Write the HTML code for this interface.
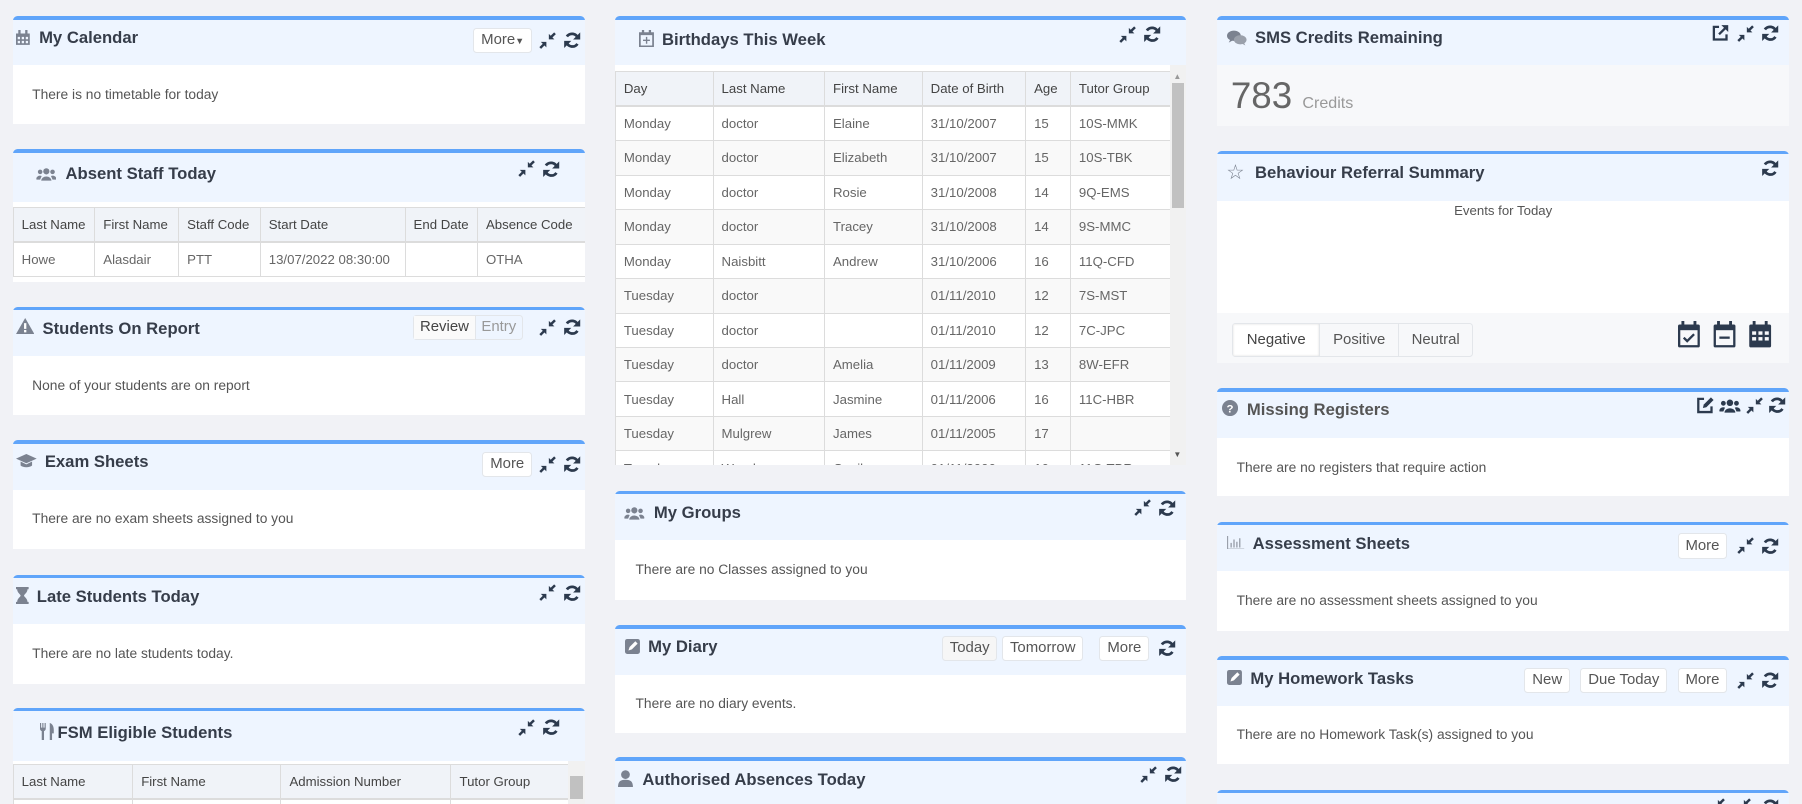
<!DOCTYPE html>
<html><head><meta charset="utf-8">
<style>
*{box-sizing:border-box;margin:0;padding:0}
html,body{width:1802px;height:804px;overflow:hidden;background:#f1f2f6}
#w{position:relative;width:1568px;height:700px;zoom:1.14923;font-family:"Liberation Sans",sans-serif;overflow:hidden}
.p{position:absolute;border-radius:4px 4px 0 0;overflow:hidden;background:#fff}
.p .bar{position:absolute;left:0;right:0;top:0;height:3px;background:#60a5fa}
.p .hd{position:absolute;left:0;right:0;top:3px;background:#eef5ff}
.p .tt{position:absolute;font-size:14.5px;font-weight:bold;color:#363d4a;white-space:nowrap}
.p .ti{position:absolute;color:#7b8290}
.p .bd{position:absolute;left:0;right:0;font-size:12px;color:#555;padding-left:17px}
.act{position:absolute;display:flex;align-items:center;gap:6px}
.ic{width:15px;height:15px;fill:#2c3a4e;stroke:#2c3a4e}
.rf{width:16px;height:16px;fill:#2c3a4e;stroke:#2c3a4e}
.btn{background:#fff;border:1px solid #e3e6ea;border-radius:3px;font-size:13px;color:#555;padding:2px 6px;height:22px;line-height:16px}
table{border-collapse:collapse;table-layout:fixed;font-size:11.5px;color:#666}
td,th{border:1px solid #dcdcdc;height:30px;padding:0 7px;text-align:left;font-weight:normal;white-space:nowrap;overflow:hidden}
th{background:#f0f3f8;color:#444;border-bottom:2px solid #dcdcdc}
tr.g td{background:#f9f9f9}
</style></head><body>
<svg width="0" height="0" style="position:absolute">
<defs>
<symbol id="cmp" viewBox="0 0 14 14"><path d="M1 13L4 10M13 1L10 4" stroke-width="2" fill="none"/><polygon points="6,8 6,12.5 1.5,8" stroke="none"/><polygon points="8,6 8,1.5 12.5,6" stroke="none"/></symbol>
<symbol id="ref" viewBox="0 0 16 16"><path d="M13 6.3A5.4 5.4 0 0 0 3.4 4.8M3 9.7A5.4 5.4 0 0 0 12.6 11.2" stroke-width="2.4" fill="none"/><polygon points="15,1.2 15,7.4 8.8,7.4" stroke="none"/><polygon points="1,14.8 1,8.6 7.2,8.6" stroke="none"/></symbol>
<symbol id="ext" viewBox="0 0 16 16"><path d="M7 2.5H2.5V13.5H13.5V9" stroke-width="2" fill="none"/><path d="M7 9L14 2" stroke-width="2" fill="none"/><polygon points="9,1 15,1 15,7" stroke="none"/></symbol>
<symbol id="grp" viewBox="0 0 20 14"><circle cx="10" cy="4" r="3"/><circle cx="4" cy="4.5" r="2.2"/><circle cx="16" cy="4.5" r="2.2"/><path d="M5 13a5 4 0 0 1 10 0z"/><path d="M0.5 12a3.5 3 0 0 1 5 -3.5L4 12z"/><path d="M19.5 12a3.5 3 0 0 0 -5 -3.5L16 12z"/></symbol>
</defs></svg>
<div id="w">

<div class="p" style="left:11px;top:14px;width:498px;height:94px">
 <div class="bar"></div><div class="hd" style="height:40px"></div>
 <svg class="ti" style="left:3px;top:12px" width="12" height="13" viewBox="0 0 12 13"><path fill="#7b8290" d="M0 3h12v10H0zM2 0h2v3H2zM8 0h2v3H8z"/><path fill="#eef5ff" d="M1.5 6h2v2h-2zM5 6h2v2H5zM8.5 6h2v2h-2zM1.5 9.5h2v2h-2zM5 9.5h2v2H5zM8.5 9.5h2v2h-2z"/></svg>
 <div class="tt" style="left:23px;top:10px">My Calendar</div>
 <div class="act" style="right:3px;top:10px"><div class="btn">More<span style="font-size:8px">▼</span></div><svg class="ic"><use href="#cmp"/></svg><svg class="rf"><use href="#ref"/></svg></div>
 <div class="bd" style="top:62px">There is no timetable for today</div>
</div>

<div class="p" style="left:11px;top:130px;width:498px;height:115px">
 <div class="bar"></div><div class="hd" style="height:43px"></div>
 <svg style="left:20px;top:15px;position:absolute" width="18" height="13"><use href="#grp" fill="#7b8290"/></svg>
 <div class="tt" style="left:46px;top:13px">Absent Staff Today</div>
 <div class="act" style="right:21px;top:9px"><svg class="ic"><use href="#cmp"/></svg><svg class="rf"><use href="#ref"/></svg></div>
 <table style="position:absolute;left:0;top:50px;width:498px">
  <colgroup><col style="width:71px"><col style="width:73px"><col style="width:71px"><col style="width:126px"><col style="width:63px"><col style="width:94px"></colgroup>
  <tr><th>Last Name</th><th>First Name</th><th>Staff Code</th><th>Start Date</th><th>End Date</th><th>Absence Code</th></tr>
  <tr><td>Howe</td><td>Alasdair</td><td>PTT</td><td>13/07/2022 08:30:00</td><td></td><td>OTHA</td></tr>
 </table>
</div>

<div class="p" style="left:11px;top:267px;width:498px;height:94px">
 <div class="bar"></div><div class="hd" style="height:40px"></div>
 <svg style="position:absolute;left:3px;top:10px" width="16" height="14" viewBox="0 0 16 14"><path fill="#7b8290" d="M8 0L16 14H0z"/><path fill="#fff" d="M7 4.5h2v5H7zM7 10.5h2v2H7z"/></svg>
 <div class="tt" style="left:26px;top:11px">Students On Report</div>
 <div class="act" style="right:3px;top:7px"><div style="display:flex;border:1px solid #e3e6ea;border-radius:3px;font-size:13px;height:22px;line-height:20px"><span style="background:#fafafa;padding:0 5px;color:#444;border-right:1px solid #e3e6ea">Review</span><span style="padding:0 5px;color:#999">Entry</span></div><svg class="ic" style="margin-left:8px"><use href="#cmp"/></svg><svg class="rf"><use href="#ref"/></svg></div>
 <div class="bd" style="top:62px">None of your students are on report</div>
</div>

<div class="p" style="left:11px;top:383px;width:498px;height:95px">
 <div class="bar"></div><div class="hd" style="height:40px"></div>
 <svg style="position:absolute;left:3px;top:12px" width="18" height="12" viewBox="0 0 18 12"><path fill="#7b8290" d="M9 0L18 4 9 8 0 4zM4 6.5v3.5c2 2 8 2 10 0V6.5L9 9z"/></svg>
 <div class="tt" style="left:28px;top:10px">Exam Sheets</div>
 <div class="act" style="right:3px;top:10px"><div class="btn">More</div><svg class="ic"><use href="#cmp"/></svg><svg class="rf"><use href="#ref"/></svg></div>
 <div class="bd" style="top:62px">There are no exam sheets assigned to you</div>
</div>

<div class="p" style="left:11px;top:500px;width:498px;height:95px">
 <div class="bar"></div><div class="hd" style="height:40px"></div>
 <svg style="position:absolute;left:3px;top:11px" width="11" height="15" viewBox="0 0 11 15"><path fill="#7b8290" d="M0 0h11v2H10C10 5 7 6.5 7 7.5S10 10 10 13h1v2H0v-2h1C1 10 4 8.5 4 7.5S1 5 1 2H0z"/></svg>
 <div class="tt" style="left:21px;top:11px">Late Students Today</div>
 <div class="act" style="right:3px;top:8px"><svg class="ic"><use href="#cmp"/></svg><svg class="rf"><use href="#ref"/></svg></div>
 <div class="bd" style="top:62px">There are no late students today.</div>
</div>

<div class="p" style="left:11px;top:616px;width:498px;height:90px">
 <div class="bar"></div><div class="hd" style="height:43px"></div>
 <svg style="position:absolute;left:24px;top:13px" width="12" height="15" viewBox="0 0 12 15"><path fill="#7b8290" d="M0 0h1v4h1V0h1v4h1V0h1v5c0 1-1 2-1.5 2V15h-2V7C1 7 0 6 0 5zM8 0c2 0 4 2 4 6v3h-1.5V15h-2V0z"/></svg>
 <div class="tt" style="left:39px;top:13px">FSM Eligible Students</div>
 <div class="act" style="right:21px;top:9px"><svg class="ic"><use href="#cmp"/></svg><svg class="rf"><use href="#ref"/></svg></div>
 <table style="position:absolute;left:0;top:49px;width:483px">
  <colgroup><col style="width:104px"><col style="width:129px"><col style="width:148px"><col style="width:102px"></colgroup>
  <tr><th>Last Name</th><th>First Name</th><th>Admission Number</th><th>Tutor Group</th></tr>
  <tr><td></td><td></td><td></td><td></td></tr>
 </table>
 <div style="position:absolute;left:483px;top:46px;width:15px;height:60px;background:#f1f1f1"></div>
 <div style="position:absolute;left:485px;top:59px;width:11px;height:20px;background:#c1c1c1"></div>
</div>

<div class="p" style="left:535px;top:14px;width:497px;height:391px">
 <div class="bar"></div><div class="hd" style="height:40px"></div>
 <svg style="position:absolute;left:21px;top:12px" width="13" height="15" viewBox="0 0 13 15"><path fill="#7b8290" d="M0 2h13v13H0zM2.5 0h2v3h-2zM8.5 0h2v3h-2z"/><path fill="#eef5ff" d="M1.5 4.5h10v9h-10z"/><path fill="#7b8290" d="M6 6h1.2v6H6zM3.5 8.4h6v1.2h-6z"/></svg>
 <div class="tt" style="left:41px;top:12px">Birthdays This Week</div>
 <div class="act" style="right:21px;top:8px"><svg class="ic"><use href="#cmp"/></svg><svg class="rf"><use href="#ref"/></svg></div>
 <div style="position:absolute;left:0;top:48px;width:483px;height:343px;overflow:hidden">
 <table style="width:483px">
  <colgroup><col style="width:85px"><col style="width:97px"><col style="width:85px"><col style="width:90px"><col style="width:39px"><col style="width:87px"></colgroup>
  <tr><th>Day</th><th>Last Name</th><th>First Name</th><th>Date of Birth</th><th>Age</th><th>Tutor Group</th></tr>
  <tr><td>Monday</td><td>doctor</td><td>Elaine</td><td>31/10/2007</td><td>15</td><td>10S-MMK</td></tr>
  <tr class="g"><td>Monday</td><td>doctor</td><td>Elizabeth</td><td>31/10/2007</td><td>15</td><td>10S-TBK</td></tr>
  <tr><td>Monday</td><td>doctor</td><td>Rosie</td><td>31/10/2008</td><td>14</td><td>9Q-EMS</td></tr>
  <tr class="g"><td>Monday</td><td>doctor</td><td>Tracey</td><td>31/10/2008</td><td>14</td><td>9S-MMC</td></tr>
  <tr><td>Monday</td><td>Naisbitt</td><td>Andrew</td><td>31/10/2006</td><td>16</td><td>11Q-CFD</td></tr>
  <tr class="g"><td>Tuesday</td><td>doctor</td><td></td><td>01/11/2010</td><td>12</td><td>7S-MST</td></tr>
  <tr><td>Tuesday</td><td>doctor</td><td></td><td>01/11/2010</td><td>12</td><td>7C-JPC</td></tr>
  <tr class="g"><td>Tuesday</td><td>doctor</td><td>Amelia</td><td>01/11/2009</td><td>13</td><td>8W-EFR</td></tr>
  <tr><td>Tuesday</td><td>Hall</td><td>Jasmine</td><td>01/11/2006</td><td>16</td><td>11C-HBR</td></tr>
  <tr class="g"><td>Tuesday</td><td>Mulgrew</td><td>James</td><td>01/11/2005</td><td>17</td><td></td></tr>
  <tr><td>Tuesday</td><td>Wood</td><td>Conika</td><td>01/11/2006</td><td>16</td><td>11C-TBR</td></tr>
 </table></div>
 <div style="position:absolute;left:483px;top:43px;width:14px;height:348px;background:#f1f1f1"></div>
 <div style="position:absolute;left:485px;top:58px;width:10px;height:109px;background:#c1c1c1"></div>
 <div style="position:absolute;left:486px;top:49px;font-size:7px;color:#999">▲</div>
 <div style="position:absolute;left:486px;top:378px;font-size:7px;color:#555">▼</div>
</div>

<div class="p" style="left:535px;top:427px;width:497px;height:95px">
 <div class="bar"></div><div class="hd" style="height:40px"></div>
 <svg style="position:absolute;left:8px;top:13px" width="18" height="13"><use href="#grp" fill="#7b8290"/></svg>
 <div class="tt" style="left:34px;top:11px">My Groups</div>
 <div class="act" style="right:8px;top:7px"><svg class="ic"><use href="#cmp"/></svg><svg class="rf"><use href="#ref"/></svg></div>
 <div class="bd" style="top:62px;padding-left:18px">There are no Classes assigned to you</div>
</div>

<div class="p" style="left:535px;top:544px;width:497px;height:94px">
 <div class="bar"></div><div class="hd" style="height:40px"></div>
 <svg style="position:absolute;left:9px;top:12px" width="13" height="13" viewBox="0 0 13 13"><rect width="13" height="13" rx="2" fill="#7b8290"/><path d="M3 10l1-3 5-5 2 2-5 5z" fill="#fff"/></svg>
 <div class="tt" style="left:29px;top:10px">My Diary</div>
 <div class="act" style="right:8px;top:9px"><div class="btn" style="background:#f6f6f6">Today</div><div class="btn" style="margin-left:-2px">Tomorrow</div><div class="btn" style="margin-left:8px">More</div><svg class="rf" style="margin-left:2px"><use href="#ref"/></svg></div>
 <div class="bd" style="top:62px;padding-left:18px">There are no diary events.</div>
</div>

<div class="p" style="left:535px;top:659px;width:497px;height:50px">
 <div class="bar"></div><div class="hd" style="height:47px"></div>
 <svg style="position:absolute;left:3px;top:11px" width="13" height="15" viewBox="0 0 13 15"><circle cx="6.5" cy="4" r="3.8" fill="#7b8290"/><path d="M0 15c0-5 2-6.5 6.5-6.5S13 10 13 15z" fill="#7b8290"/></svg>
 <div class="tt" style="left:24px;top:11px">Authorised Absences Today</div>
 <div class="act" style="right:3px;top:7px"><svg class="ic"><use href="#cmp"/></svg><svg class="rf"><use href="#ref"/></svg></div>
</div>

<div class="p" style="left:1059px;top:14px;width:498px;height:96px;background:#f7f8fa">
 <div class="bar"></div><div class="hd" style="height:40px"></div>
 <svg style="position:absolute;left:9px;top:12px" width="17" height="14" viewBox="0 0 17 14"><ellipse cx="6" cy="5" rx="6" ry="4.5" fill="#7b8290"/><path d="M1.5 11l1.5-3 2 1z" fill="#7b8290"/><ellipse cx="11.5" cy="8.5" rx="5.5" ry="4" fill="#9aa0ab"/><path d="M16 13.5l-1.5-3-2 1z" fill="#9aa0ab"/></svg>
 <div class="tt" style="left:33px;top:10px">SMS Credits Remaining</div>
 <div class="act" style="right:9px;top:7px"><svg class="rf" style="fill:#2c3a4e"><use href="#ext"/></svg><svg class="ic"><use href="#cmp"/></svg><svg class="rf"><use href="#ref"/></svg></div>
 <div style="position:absolute;left:12px;top:51px;font-size:32px;color:#666;font-weight:300">783 <span style="font-size:14px;color:#999">Credits</span></div>
</div>

<div class="p" style="left:1059px;top:131px;width:498px;height:185px;background:#f7f8fa">
 <div class="bar"></div><div class="hd" style="height:41px"></div>
 <div style="position:absolute;left:0;right:0;top:44px;height:97px;background:#fff"></div>
 <div style="position:absolute;left:8px;top:8px;font-size:18px;color:#7b8290">☆</div>
 <div class="tt" style="left:33px;top:11px">Behaviour Referral Summary</div>
 <div class="act" style="right:9px;top:7px"><svg class="rf"><use href="#ref"/></svg></div>
 <div style="position:absolute;left:0;right:0;top:46px;text-align:center;font-size:11.5px;color:#555">Events for Today</div>
 <div style="position:absolute;left:13px;top:150px;display:flex;border:1px solid #e3e6ea;border-radius:3px;font-size:13px;height:30px;line-height:28px;color:#555;background:#f7f8fa">
  <span style="background:#fff;padding:0 12px;border-right:1px solid #e3e6ea;color:#444;box-shadow:inset 0 0 2px #ddd">Negative</span><span style="padding:0 11px;border-right:1px solid #e3e6ea">Positive</span><span style="padding:0 11px">Neutral</span></div>
 <svg style="position:absolute;left:401px;top:148px" width="88" height="24" viewBox="0 0 88 24">
  <g fill="#2c3a4e"><rect x="0" y="3" width="19" height="20" rx="1.5"/><rect x="3" y="0" width="2.5" height="5"/><rect x="13.5" y="0" width="2.5" height="5"/>
  <rect x="31" y="3" width="19" height="20" rx="1.5"/><rect x="34" y="0" width="2.5" height="5"/><rect x="44.5" y="0" width="2.5" height="5"/>
  <rect x="62" y="3" width="19" height="20" rx="1.5"/><rect x="65" y="0" width="2.5" height="5"/><rect x="75.5" y="0" width="2.5" height="5"/></g>
  <g fill="#f7f8fa"><rect x="2" y="8" width="15" height="13"/><rect x="33" y="8" width="15" height="13"/>
  <rect x="64.5" y="9" width="3.5" height="3"/><rect x="70" y="9" width="3.5" height="3"/><rect x="75.5" y="9" width="3.5" height="3"/>
  <rect x="64.5" y="14" width="3.5" height="3"/><rect x="70" y="14" width="3.5" height="3"/><rect x="75.5" y="14" width="3.5" height="3"/></g>
  <path d="M5 14.5l3 3 6-6" stroke="#2c3a4e" stroke-width="2" fill="none"/><rect x="36" y="13.5" width="9" height="2" fill="#2c3a4e"/>
 </svg>
</div>

<div class="p" style="left:1059px;top:338px;width:498px;height:94px">
 <div class="bar"></div><div class="hd" style="height:40px"></div>
 <svg style="position:absolute;left:4px;top:10px" width="14" height="14" viewBox="0 0 14 14"><circle cx="7" cy="7" r="7" fill="#7b8290"/><text x="7" y="11" font-size="10" font-weight="bold" text-anchor="middle" fill="#fff" font-family="Liberation Sans">?</text></svg>
 <div class="tt" style="left:26px;top:10px;color:#555">Missing Registers</div>
 <div class="act" style="right:3px;top:7px;gap:4px"><svg class="rf" viewBox="0 0 16 16"><path d="M7 2.5H2V14H13.5V9" stroke-width="2" fill="none"/><path d="M6 10.5l0.7-3 6.3-6.3 2.3 2.3-6.3 6.3z" stroke="none"/></svg><svg style="width:19px;height:14px"><use href="#grp" fill="#2c3a4e"/></svg><svg class="ic"><use href="#cmp"/></svg><svg class="rf"><use href="#ref"/></svg></div>
 <div class="bd" style="top:62px">There are no registers that require action</div>
</div>

<div class="p" style="left:1059px;top:454px;width:498px;height:95px">
 <div class="bar"></div><div class="hd" style="height:40px"></div>
 <svg style="position:absolute;left:9px;top:12px" width="15" height="12" viewBox="0 0 15 12"><path fill="#9aa0ab" d="M0 0h1v11h14v1H0zM3 6h1.2v4H3zM5.5 3h1.2v7H5.5zM8 5h1.2v5H8zM10.5 2h1.2v8h-1.2z"/></svg>
 <div class="tt" style="left:31px;top:11px">Assessment Sheets</div>
 <div class="act" style="right:9px;top:10px"><div class="btn">More</div><svg class="ic" style="margin-left:2px"><use href="#cmp"/></svg><svg class="rf"><use href="#ref"/></svg></div>
 <div class="bd" style="top:62px">There are no assessment sheets assigned to you</div>
</div>

<div class="p" style="left:1059px;top:571px;width:498px;height:94px">
 <div class="bar"></div><div class="hd" style="height:40px"></div>
 <svg style="position:absolute;left:9px;top:12px" width="13" height="13" viewBox="0 0 13 13"><rect width="13" height="13" rx="2" fill="#7b8290"/><path d="M3 10l1-3 5-5 2 2-5 5z" fill="#fff"/></svg>
 <div class="tt" style="left:29px;top:11px">My Homework Tasks</div>
 <div class="act" style="right:9px;top:10px"><div class="btn">New</div><div class="btn" style="margin-left:3px">Due Today</div><div class="btn" style="margin-left:3px">More</div><svg class="ic" style="margin-left:2px"><use href="#cmp"/></svg><svg class="rf"><use href="#ref"/></svg></div>
 <div class="bd" style="top:62px">There are no Homework Task(s) assigned to you</div>
</div>

<div class="p" style="left:1059px;top:687px;width:498px;height:20px">
 <div class="bar"></div><div class="hd" style="height:17px"></div>
 <div class="act" style="right:9px;top:7px;gap:8px"><svg class="ic"><use href="#cmp"/></svg><svg class="ic"><use href="#cmp"/></svg><svg class="rf"><use href="#ref"/></svg></div>
</div>

</div>
</body></html>
